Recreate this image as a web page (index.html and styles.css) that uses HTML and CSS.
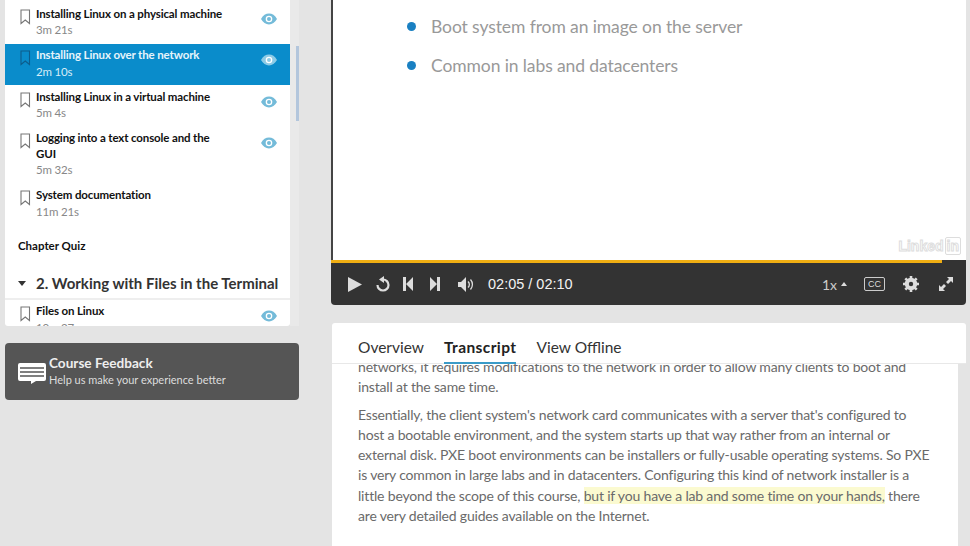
FILE: index.html
```html
<!DOCTYPE html>
<html lang="en">
<head>
    <meta charset="UTF-8">
    <meta name="viewport" content="width=device-width, initial-scale=1.0">
    <title>Course player</title>
    <link rel="stylesheet" href="styles.css">
</head>
<body>
    <svg class="defs" width="0" height="0">
        <symbol id="bookmark" viewBox="0 0 12 16">
            <path d="M2 1h8.500v13.500l-4.250-3.500-4.250 3.500z" fill="none" stroke="currentColor" stroke-width="1.100"/>
        </symbol>
        <symbol id="eye" viewBox="0 0 16 12">
            <path d="M0 6c2-3.600 4.800-5.400 8-5.400s6 1.800 8 5.400c-2 3.600-4.800 5.400-8 5.400s-6-1.800-8-5.400z" fill="currentColor"/>
            <circle cx="8" cy="6" r="3.300" fill="#fff"/>
            <circle cx="8" cy="6" r="2" fill="currentColor"/>
        </symbol>
    </svg>

    <aside class="side">
        <div class="outline">
            <div class="card">
                <div class="item">
                    <svg class="mark"><use href="#bookmark"/></svg>
                    <div class="info"><p class="title">Installing Linux on a physical machine</p><p class="len">3m 21s</p></div>
                    <svg class="eye"><use href="#eye"/></svg>
                </div>
                <div class="item active">
                    <svg class="mark"><use href="#bookmark"/></svg>
                    <div class="info"><p class="title">Installing Linux over the network</p><p class="len">2m 10s</p></div>
                    <svg class="eye"><use href="#eye"/></svg>
                </div>
                <div class="item">
                    <svg class="mark"><use href="#bookmark"/></svg>
                    <div class="info"><p class="title">Installing Linux in a virtual machine</p><p class="len">5m 4s</p></div>
                    <svg class="eye"><use href="#eye"/></svg>
                </div>
                <div class="item">
                    <svg class="mark"><use href="#bookmark"/></svg>
                    <div class="info"><p class="title">Logging into a text console and the GUI</p><p class="len">5m 32s</p></div>
                    <svg class="eye"><use href="#eye"/></svg>
                </div>
                <div class="item">
                    <svg class="mark"><use href="#bookmark"/></svg>
                    <div class="info"><p class="title">System documentation</p><p class="len">11m 21s</p></div>
                </div>
                <p class="quiz">Chapter Quiz</p>
                <div class="chapter"><span class="caret"></span><h2>2. Working with Files in the Terminal</h2></div>
                <div class="item">
                    <svg class="mark"><use href="#bookmark"/></svg>
                    <div class="info"><p class="title">Files on Linux</p><p class="len">10m 27s</p></div>
                    <svg class="eye"><use href="#eye"/></svg>
                </div>
            </div>
            <div class="track"><div class="thumb"></div></div>
        </div>

        <div class="feedback">
            <svg class="bubble" width="28" height="21" viewBox="0 0 28 21">
                <path d="M2 0h24a2 2 0 0 1 2 2v14a2 2 0 0 1-2 2H18l-5 3v-3H2a2 2 0 0 1-2-2V2a2 2 0 0 1 2-2z" fill="#fff"/>
                <path d="M2 5h24M2 9h24M2 13h24" stroke="#555" stroke-width="1.300"/>
            </svg>
            <div>
                <p class="fb-title">Course Feedback</p>
                <p class="fb-text">Help us make your experience better</p>
            </div>
        </div>
    </aside>

    <main class="main">
        <div class="player">
            <div class="slide">
                <ul class="points">
                    <li>Boot system from an image on the server</li>
                    <li>Common in labs and datacenters</li>
                </ul>
                <div class="brand">Linked<span>in</span></div>
            </div>
            <div class="progress"><div class="played"></div></div>
            <div class="controls">
                <svg class="ctl play" width="14" height="15" viewBox="0 0 14 15"><path d="M0 0l14 7.500L0 15z"/></svg>
                <svg class="ctl replay" width="14" height="16" viewBox="0 0 14 16"><path d="M7 3.500a5.500 5.500 0 1 1-5.500 5.500" fill="none" stroke="#ddd" stroke-width="2.200"/><path d="M8 0v7L3 3.500z"/></svg>
                <svg class="ctl prev" width="10" height="14" viewBox="0 0 10 14"><path d="M0 0h3v14H0zM10 0v14L3 7z"/></svg>
                <svg class="ctl next" width="10" height="14" viewBox="0 0 10 14"><path d="M10 0H7v14h3zM0 0v14l7-7z"/></svg>
                <svg class="ctl vol" width="16" height="15" viewBox="0 0 16 15"><path d="M0 5h3l5-5v15l-5-5H0z"/><path d="M10 4.500a4 4 0 0 1 0 6M12.500 2.500a7.500 7.500 0 0 1 0 10" fill="none" stroke="#ddd" stroke-width="1.300"/></svg>
                <span class="time">02:05 / 02:10</span>
                <span class="speed">1x<i></i></span>
                <span class="cc">CC</span>
                <svg class="ctl gear" width="16" height="16" viewBox="0 0 16 16"><circle cx="8" cy="8" r="4.600" fill="none" stroke="#ddd" stroke-width="3.200"/><path d="M8 0v16M0 8h16M2.300 2.300l11.400 11.400M13.700 2.300L2.300 13.700" stroke="#ddd" stroke-width="2.600"/><circle cx="8" cy="8" r="2.200" fill="#333"/></svg>
                <svg class="ctl full" width="14" height="14" viewBox="0 0 14 14"><path d="M8 0h6v6l-2-2-3 3-2-2 3-3zM6 14H0V8l2 2 3-3 2 2-3 3z"/></svg>
            </div>
        </div>

        <nav class="tabs">
            <a>Overview</a>
            <a class="current">Transcript</a>
            <a>View Offline</a>
        </nav>

        <div class="transcript">
            <p>networks, it requires modifications to the network in order to allow many clients to boot and<br>install at the same time.</p>
            <p>Essentially, the client system's network card communicates with a server that's configured to<br>host a bootable environment, and the system starts up that way rather from an internal or<br>external disk. PXE boot environments can be installers or fully-usable operating systems. So PXE<br>is very common in large labs and in datacenters. Configuring this kind of network installer is a<br>little beyond the scope of this course, <mark>but if you have a lab and some time on your hands,</mark> there<br>are very detailed guides available on the Internet.</p>
        </div>
    </main>
</body>
</html>
```

FILE: styles.css
```css
* {
    padding: 0;
    margin: 0;
    box-sizing: border-box;
}

body {
    width: 970px;
    height: 546px;
    overflow: hidden;
    display: flex;
    background-color: #e4e4e4;
    font-family: Lato, "Open Sans", sans-serif;
}

.defs {
    position: absolute;
}

/* left column */
.side {
    width: 331px;
    padding-left: 5px;
}

.outline {
    display: flex;
    width: 294px;
    height: 326px;
}

.card {
    width: 285px;
    height: 326px;
    overflow: hidden;
    background-color: #fff;
    border-radius: 0 0 3px 3px;
    padding-top: 2px;
}

.track {
    width: 9px;
    background-color: #e9e9e9;
    padding: 46px 0 0 6px;
}

.thumb {
    width: 3px;
    height: 75px;
    background-color: #b3c6dc;
}

.item {
    display: flex;
    align-items: flex-start;
    padding: 3.500px 13px 5.500px 14px;
    color: #111;
}

.item.active {
    background-color: #0a8ccb;
    color: #e6f4fb;
}

.mark {
    width: 12px;
    height: 16px;
    flex: none;
    margin-top: 3px;
    color: #777;
}

.active .mark {
    color: #0d5d8c;
}

.info {
    flex: 1;
    margin-left: 5px;
    padding-right: 35px;
}

.title {
    font-size: 11.500px;
    font-weight: 700;
    line-height: 15.500px;
    letter-spacing: -.13px;
}

.len {
    font-size: 11.500px;
    line-height: 17px;
    letter-spacing: -.2px;
    color: #888;
}

.active .len {
    color: #d7ecf7;
}

.eye {
    width: 16px;
    height: 12px;
    flex: none;
    margin-top: 7px;
    color: #74bbd9;
}

.active .eye {
    color: #8dcbe6;
}

.quiz {
    font-size: 11.500px;
    font-weight: 700;
    color: #111;
    margin-top: 13px;
    padding-left: 13px;
    line-height: 16px;
}

.chapter {
    display: flex;
    align-items: center;
    height: 31px;
    margin-top: 14.500px;
    padding-left: 13px;
    border-bottom: 2px solid #eee;
}

.caret {
    width: 0;
    height: 0;
    border-left: 4.500px solid transparent;
    border-right: 4.500px solid transparent;
    border-top: 5px solid #333;
    margin-right: 10px;
}

.chapter h2 {
    font-size: 15px;
    font-weight: 700;
    color: #333;
    white-space: nowrap;
}

.feedback {
    display: flex;
    align-items: center;
    width: 294px;
    height: 57px;
    margin-top: 17px;
    padding: 0 0 3px 13px;
    background-color: #555;
    border-radius: 4px;
    color: #fff;
}

.bubble {
    flex: none;
    margin: 7px 3px 0 0;
}

.fb-title {
    font-size: 13.600px;
    font-weight: 700;
    line-height: 18px;
    color: #eee;
}

.fb-text {
    font-size: 11px;
    line-height: 15px;
    color: #ddd;
}

/* player */
.main {
    width: 635px;
}

.slide {
    position: relative;
    height: 260px;
    background-color: #fff;
    border-left: 2px solid #444;
    overflow: hidden;
}

.points {
    list-style: none;
    padding: 7.500px 0 0 74px;
}

.points li {
    display: flex;
    align-items: center;
    height: 38.500px;
    font-size: 17.500px;
    letter-spacing: -.1px;
    color: #999;
}

.points li::before {
    content: "";
    width: 9px;
    height: 9px;
    border-radius: 50%;
    background-color: #1a80c2;
    margin-right: 15px;
}

/* watermark sits on top of the slide */
.brand {
    position: absolute;
    right: 5px;
    bottom: 6px;
    font: bold 14px "Liberation Sans", Arial, sans-serif;
    color: #fff;
    -webkit-text-stroke: 1px #ddd;
}

.brand span {
    border: 1px solid #ddd;
    border-radius: 2px;
    margin-left: 1px;
    padding: 0 1px;
}

.progress {
    height: 3px;
    background-color: #333;
}

.played {
    width: 611px;
    height: 3px;
    background-color: #f0ae13;
}

.controls {
    display: flex;
    align-items: center;
    height: 42px;
    padding-left: 17px;
    background-color: #333;
    border-radius: 0 0 4px 4px;
}

.ctl {
    flex: none;
    fill: #ddd;
}

.replay {
    margin-left: 14px;
}

.prev {
    margin-left: 13px;
}

.next {
    margin-left: 17px;
}

.vol {
    margin-left: 18px;
}

.time {
    margin-left: 14px;
    font: 14.500px "Liberation Sans", Arial, sans-serif;
    color: #f2f2f2;
}

.speed {
    display: flex;
    align-items: center;
    margin-left: auto;
    font-size: 14px;
    color: #ccc;
}

.speed i {
    width: 0;
    height: 0;
    margin-left: 4px;
    border-left: 3.500px solid transparent;
    border-right: 3.500px solid transparent;
    border-bottom: 4px solid #ddd;
}

.cc {
    width: 21px;
    height: 14px;
    margin-left: 17px;
    border: 1px solid #ccc;
    border-radius: 2px;
    font: 9px/12px "Liberation Sans", Arial, sans-serif;
    color: #ddd;
    text-align: center;
}

.gear {
    margin-left: 18px;
}

.full {
    margin: 0 13px 0 20px;
}

/* tabs + text */
.tabs {
    position: relative;
    display: flex;
    gap: 20px;
    height: 41px;
    margin: 18px 0 0 1px;
    padding: 15px 0 0 26px;
    background-color: #fff;
    border-radius: 3px 3px 0 0;
    border-bottom: 1px solid #e8e8e8;
    font-size: 15.500px;
    color: #333;
}

.tabs a {
    height: 26px;
    line-height: 18px;
}

.tabs .current {
    font-weight: 700;
    color: #222;
    letter-spacing: .4px;
    border-bottom: 2px solid #3a9bc8;
}

.transcript {
    width: 626px;
    height: 190px;
    margin-left: 1px;
    padding: 0 26px;
    background-color: #fff;
    overflow: hidden;
    font-size: 14px;
    line-height: 20.100px;
    letter-spacing: -.18px;
    color: #6a6a6a;
    white-space: nowrap;
}

.transcript p {
    margin-bottom: 8px;
}

.transcript p:first-child {
    margin-top: -7px;
}

mark {
    background-color: #fbfad0;
    color: #6a6a6a;
}
```
